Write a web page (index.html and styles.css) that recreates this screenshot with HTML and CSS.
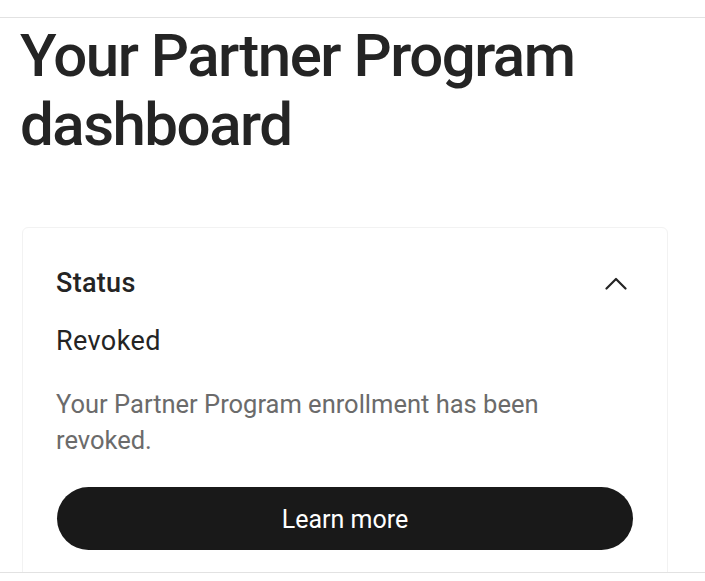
FILE: index.html
```html
<!DOCTYPE html>
<html lang="en">
<head>
<meta charset="utf-8">
<title>Your Partner Program dashboard</title>
<link rel="stylesheet" href="styles.css">
</head>
<body>
  <header class="topbar"></header>
  <main class="page">
    <h1 class="title">Your Partner Program dashboard</h1>
    <section class="card">
      <div class="card-head">
        <h2 class="card-title">Status</h2>
        <svg class="chevron" width="24" height="14" viewBox="0 0 24 14" aria-hidden="true">
          <polyline points="2.5,12.5 12,3 21.5,12.5" fill="none" stroke="#242424" stroke-width="2.2" stroke-linecap="round" stroke-linejoin="round"/>
        </svg>
      </div>
      <p class="status-value">Revoked</p>
      <p class="status-desc">Your Partner Program enrollment has been revoked.</p>
      <button class="btn" type="button">Learn more</button>
    </section>
  </main>
  <nav class="bottombar"></nav>
</body>
</html>
```

FILE: styles.css
```css
* { box-sizing: border-box; }

html, body {
  margin: 0;
  padding: 0;
  background: #ffffff;
  height: 100%;
  overflow: hidden;
}

body {
  font-family: Roboto, "Liberation Sans", Arial, sans-serif;
  color: #242424;
}

.topbar {
  height: 18px;
  border-bottom: 1px solid #e2e2e2;
}

.page {
  padding: 0 37px 0 22px;
}

.title {
  margin: 3px 0 0 -2px;
  font-size: 60px;
  line-height: 69px;
  font-weight: 500;
  letter-spacing: -1.5px;
  color: #242424;
  max-width: 600px;
}

.card {
  margin-top: 68px;
  border: 1px solid #f2f2f2;
  border-radius: 6px;
  padding: 39px 34px 40px 34px;
  display: flex;
  flex-direction: column;
}

.card-head {
  display: flex;
  align-items: center;
  justify-content: space-between;
  height: 32px;
}

.card-title {
  margin: 0 0 0 -1px;
  font-size: 27px;
  line-height: 32px;
  font-weight: 500;
  letter-spacing: 0.3px;
}

.chevron {
  display: block;
  margin-right: 5px;
  margin-top: -1px;
}

.status-value {
  margin: 26px 0 0 -1px;
  font-size: 27px;
  line-height: 32px;
  font-weight: 400;
  letter-spacing: 0.4px;
}

.status-desc {
  margin: 29px 0 0 -1px;
  font-size: 25.5px;
  line-height: 36px;
  color: #6b6b6b;
  max-width: 500px;
}

.btn {
  margin-top: 29px;
  height: 63px;
  width: 100%;
  border: none;
  border-radius: 32px;
  background: #191919;
  color: #ffffff;
  font-family: Roboto, "Liberation Sans", Arial, sans-serif;
  font-size: 25px;
  font-weight: 400;
  padding-top: 3px;
  cursor: pointer;
}

.bottombar {
  position: fixed;
  left: 0;
  right: 0;
  top: 572px;
  bottom: 0;
  background: #ffffff;
  border-top: 1px solid #e2e2e2;
}
```
